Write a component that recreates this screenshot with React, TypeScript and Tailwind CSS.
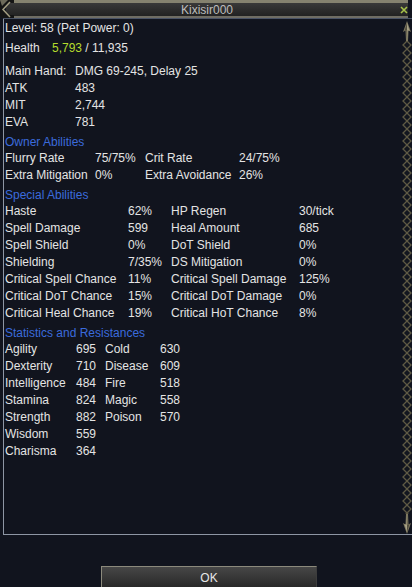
import React from "react";

type Pair = [string, string];

const ownerRows: [Pair, Pair][] = [
  [["Flurry Rate", "75/75%"], ["Crit Rate", "24/75%"]],
  [["Extra Mitigation", "0%"], ["Extra Avoidance", "26%"]],
];

const specialRows: [Pair, Pair][] = [
  [["Haste", "62%"], ["HP Regen", "30/tick"]],
  [["Spell Damage", "599"], ["Heal Amount", "685"]],
  [["Spell Shield", "0%"], ["DoT Shield", "0%"]],
  [["Shielding", "7/35%"], ["DS Mitigation", "0%"]],
  [["Critical Spell Chance", "11%"], ["Critical Spell Damage", "125%"]],
  [["Critical DoT Chance", "15%"], ["Critical DoT Damage", "0%"]],
  [["Critical Heal Chance", "19%"], ["Critical HoT Chance", "8%"]],
];

const statRows: [Pair, Pair | null][] = [
  [["Agility", "695"], ["Cold", "630"]],
  [["Dexterity", "710"], ["Disease", "609"]],
  [["Intelligence", "484"], ["Fire", "518"]],
  [["Stamina", "824"], ["Magic", "558"]],
  [["Strength", "882"], ["Poison", "570"]],
  [["Wisdom", "559"], null],
  [["Charisma", "364"], null],
];

function Header({ children }: { children: React.ReactNode }) {
  return <div className="mt-[4px] h-[15px] leading-[15px] text-[#3b6bdc]">{children}</div>;
}

function Chain() {
  return (
    <svg width="10" height="100%" className="block">
      <defs>
        <pattern id="links" width="10" height="8" patternUnits="userSpaceOnUse">
          <path d="M5 0 L9 4 L5 8 L1 4 Z" fill="none" stroke="#5f5a44" strokeWidth="1.3" />
          <path d="M5 2 L7 4 L5 6 L3 4 Z" fill="#14171f" />
        </pattern>
      </defs>
      <rect x="0" y="0" width="10" height="100%" fill="url(#links)" />
    </svg>
  );
}

function Spear({ down }: { down?: boolean }) {
  return (
    <svg width="10" height="20" viewBox="0 0 10 20" className={down ? "block rotate-180" : "block"}>
      <path d="M5 0 L9 11 L6.5 9.5 L6 20 L4 20 L3.5 9.5 L1 11 Z" fill="#7d7860" />
      <path d="M5 2 L7.5 10 L5.5 9 L5 18 Z" fill="#a9a388" />
      <path d="M5 2 L2.5 10 L4.5 9 L5 18 Z" fill="#524e3e" />
    </svg>
  );
}

export default function App() {
  return (
    <div
      className="w-[412px] h-[587px] bg-[#11141e] flex flex-col overflow-hidden text-[12px] text-[#e4e4e4]"
      style={{ fontFamily: '"Liberation Sans", Arial, sans-serif' }}
    >
      {/* title bar */}
      <div className="relative h-[19px] shrink-0">
        <div className="absolute left-[6px] right-[4px] top-0 h-[18px] border-t-[3px] border-t-[#85826f] border-b-[2px] border-b-[#6f6d64] bg-gradient-to-b from-[#393939] to-[#222222] flex items-center justify-center">
          <span className="text-[#bdbdbd] leading-none pt-[1px]">Kixisir000</span>
        </div>
        <svg width="14" height="19" viewBox="0 0 14 19" className="absolute left-0 top-0">
          <path d="M0 0 L14 0 L14 3 L9 3 L3 9.5 L9 15 L14 15 L14 18 L2 18 L0 16 Z" fill="#141414" />
          <path d="M10 2 L3 9.5 L10 17" fill="none" stroke="#a39d82" strokeWidth="1.5" />
          <path d="M0 0 L8 0 L2 6 Z" fill="#6d6a5a" />
        </svg>
        <svg width="10" height="10" viewBox="0 0 10 10" className="absolute right-[3px] top-[5px]">
          <path d="M2 2 L8 8 M8 2 L2 8" stroke="#a7c24a" strokeWidth="1.6" />
        </svg>
        <div className="absolute left-[3px] right-0 bottom-0 h-[1px] bg-[#4a5366]" />
      </div>

      {/* content panel */}
      <div className="ml-[3px] h-[516px] shrink-0 border-l border-b border-[#8e96a4] flex">
        <div className="flex-1 pl-[1px] pt-[1px] leading-[17px]">
          <div className="h-[17px]">Level: 58 (Pet Power: 0)</div>
          <div className="h-[17px] mt-[3px] flex">
            <span className="w-[47px]">Health</span>
            <span className="text-[#b4dc2c]">5,793</span>
            <span>&nbsp;/ 11,935</span>
          </div>
          <div className="mt-[6px] grid grid-cols-[70px_auto]">
            <span>Main Hand:</span>
            <span>DMG 69-245, Delay 25</span>
            <span>ATK</span>
            <span>483</span>
            <span>MIT</span>
            <span>2,744</span>
            <span>EVA</span>
            <span>781</span>
          </div>

          <Header>Owner Abilities</Header>
          <div className="grid grid-cols-[90px_50px_94px_auto]">
            {ownerRows.map(([a, b]) => (
              <React.Fragment key={a[0]}>
                <span>{a[0]}</span>
                <span>{a[1]}</span>
                <span>{b[0]}</span>
                <span>{b[1]}</span>
              </React.Fragment>
            ))}
          </div>

          <Header>Special Abilities</Header>
          <div className="grid grid-cols-[123px_43px_128px_auto]">
            {specialRows.map(([a, b]) => (
              <React.Fragment key={a[0]}>
                <span>{a[0]}</span>
                <span>{a[1]}</span>
                <span>{b[0]}</span>
                <span>{b[1]}</span>
              </React.Fragment>
            ))}
          </div>

          <Header>Statistics and Resistances</Header>
          <div className="grid grid-cols-[71px_29px_55px_auto]">
            {statRows.map(([a, b]) => (
              <React.Fragment key={a[0]}>
                <span>{a[0]}</span>
                <span>{a[1]}</span>
                <span>{b ? b[0] : ""}</span>
                <span>{b ? b[1] : ""}</span>
              </React.Fragment>
            ))}
          </div>
        </div>

        {/* scrollbar */}
        <div className="w-[10px] flex flex-col pt-[2px]">
          <Spear />
          <div className="flex-1">
            <Chain />
          </div>
          <Spear down />
        </div>
      </div>

      {/* footer */}
      <div className="flex-1 pl-[101px] pt-[31px]">
        <button className="w-[216px] h-[24px] border border-[#8c8a7c] border-r-[#3c3c3c] border-b-[#2a2a2a] bg-gradient-to-b from-[#474747] to-[#262626] text-[#e8e8e8] leading-[20px] text-center">
          OK
        </button>
      </div>
    </div>
  );
}
